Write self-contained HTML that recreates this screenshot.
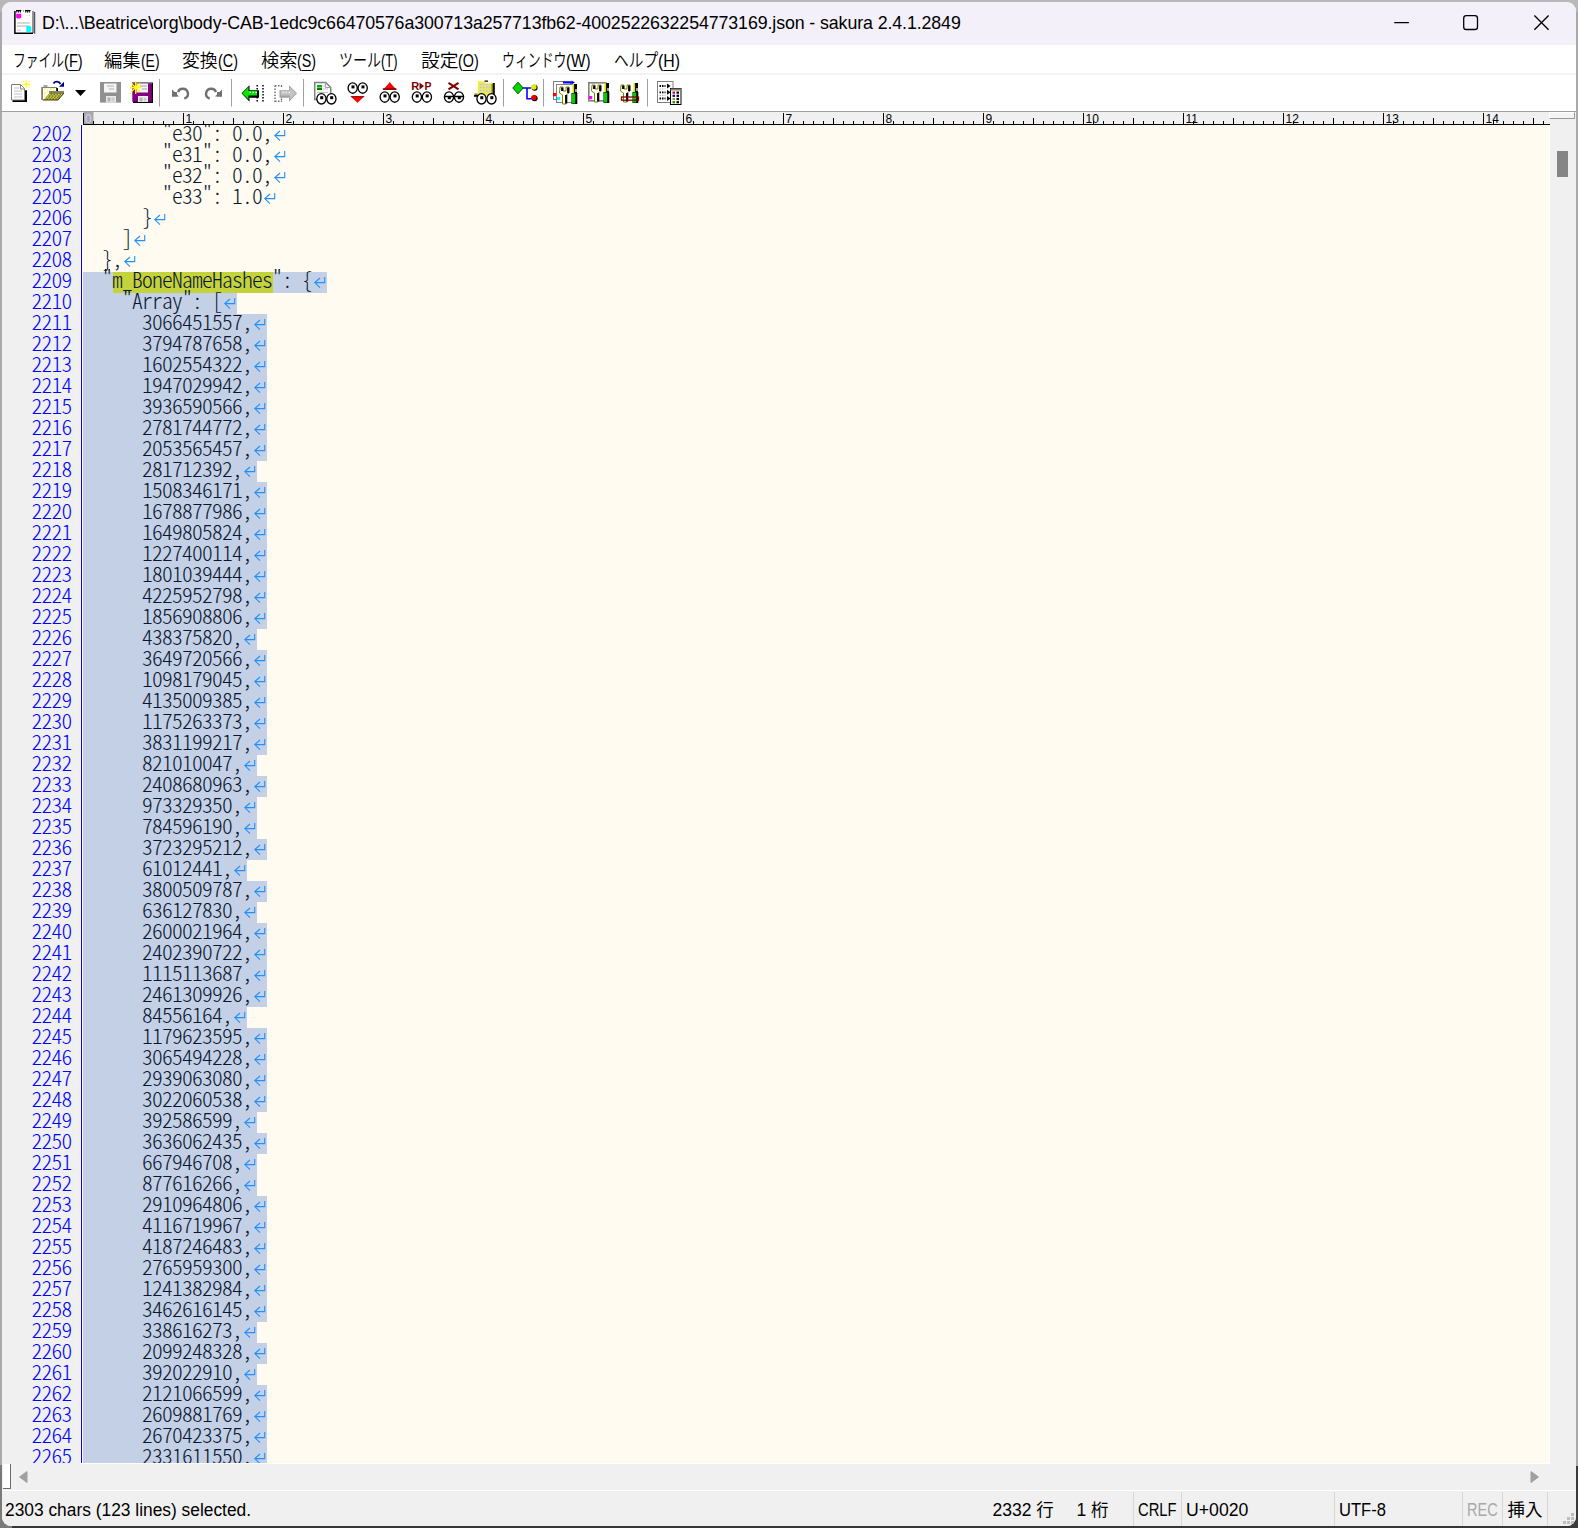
<!DOCTYPE html>
<html lang="ja">
<head>
<meta charset="utf-8">
<title>sakura</title>
<style>
*{box-sizing:border-box;margin:0;padding:0}
html,body{width:1578px;height:1528px;overflow:hidden}
body{position:relative;background:#a9a9a9;font-family:"Liberation Sans","Noto Sans CJK JP",sans-serif;color:#000}
.abs{position:absolute}
#bgtop{left:0;top:0;width:1578px;height:12px;background:#b8b8b8}
#bgleft{left:0;top:1465px;width:14px;height:63px;background:#7a7a7a}
#bgbottom{left:12px;top:1516px;width:1566px;height:12px;background:#363636}
#bgright{left:1570px;top:1466px;width:8px;height:62px;background:#3b3b3b}
#win{left:2px;top:2px;width:1574px;height:1524px;border-radius:9px;overflow:hidden;background:#f0f0f0}
#title{left:0;top:0;width:1574px;height:43px;background:#f3f0f9}
#title .t{left:40px;top:8.5px;font-size:17.8px;letter-spacing:-0.1px;line-height:24px;white-space:nowrap}
#menu{left:0;top:43px;width:1574px;height:28px;background:#fff}
#menu span{position:absolute;top:2px;line-height:24px;white-space:nowrap;transform-origin:0 50%}
#menu .mc{top:4px;font-size:18px;font-family:"Liberation Sans","Noto Sans CJK JP",sans-serif;font-weight:350}
#menu .ml{top:4px;font-size:17.5px;font-family:"Liberation Sans",sans-serif}
#menu u{text-decoration:underline;text-underline-offset:2.5px;text-decoration-thickness:1px}
#msep{left:0;top:71px;width:1574px;height:2px;background:#f3f3f3;z-index:2}
#tool{left:0;top:72px;width:1574px;height:37px;background:#fff}
#tool .sep{position:absolute;top:6px;width:1px;height:27px;background:#a0a0a0}
#rulertop{left:0;top:109px;width:1574px;height:1px;background:#a0a0a0}
#rulerbg{left:0;top:110px;width:1548px;height:13px;background:#f0f0f0}
#ruler{left:81px;top:109px}
#ruler text{font-family:"Liberation Sans",sans-serif;font-size:12px;fill:#000}
#gutter{left:0;top:123px;width:78px;height:1338px;background:#f0f0f0}
#gline{left:79px;top:123px;width:1px;height:1338px;background:#0000ff}
#edit{left:78px;top:123px;width:1470px;height:1339px;background:#fffbf0;overflow:hidden;border-right:1px solid #fff;border-bottom:1px solid #fff}
#rows{left:0;top:123px;width:1547px;height:1338px;overflow:hidden}
.row{position:absolute;left:0;width:1548px;height:21px;font-family:"Noto Sans CJK JP","IPAGothic",monospace;font-weight:300;font-feature-settings:"hwid";font-size:21.5px;letter-spacing:-0.75px;line-height:21px;white-space:pre}
.row .no{position:absolute;left:29.5px;top:-4px;color:#0000ff}
.row .tx{position:absolute;left:80px;top:-4px;color:#0a1630}
.row .eol{position:absolute;top:0;width:14px;height:21px;fill:none;stroke:#2090ff;stroke-width:1.1}
#bgs{left:0;top:123px;width:1547px;height:1338px;overflow:hidden}
#bgs i{position:absolute;height:21px;background:#c3d0e5}
#bgs i.hl{background:#c4d23c}
#vscroll{left:1548px;top:123px;width:26px;height:1339px;background:#f0f0f0}
#vthumb{left:1555px;top:149px;width:11px;height:26px;background:#858585}
#split{left:1547px;top:110px;width:26px;height:7px;background:#f4f4f4;border:1px solid #989898;border-top-color:#fff;border-left-color:#fff;border-bottom-width:1.5px}
#hscroll{left:0;top:1462px;width:1574px;height:26px;background:#f0f0f0}
#status{left:0;top:1488px;width:1574px;height:36px;background:#f0f0f0;border-top:1px solid #fff}
#status span{position:absolute;top:7px;font-size:17.5px;line-height:24px;white-space:nowrap;transform-origin:0 50%}
#status i{position:absolute;top:1px;width:1px;height:34px;background:#d7d7d7}
</style>
</head>
<body>
<div id="bgtop" class="abs"></div>
<div id="bgleft" class="abs"></div>
<div id="bgbottom" class="abs"></div>
<div id="bgright" class="abs"></div>
<div id="win" class="abs">
  <div id="title" class="abs">
    <svg class="abs" style="left:11px;top:7px" width="24" height="26" viewBox="13 9 24 26">
      <rect x="15" y="11" width="17.5" height="22" fill="#fff"/>
      <path d="M14.9 11V33.2H33" fill="none" stroke="#000" stroke-width="1.5"/>
      <path d="M33 11V33M34.7 12V33.8" stroke="#303030" stroke-width="1"/>
      <path d="M16 10.6H21.3M25 10.6H30.6" stroke="#000" stroke-width="1.3"/>
      <path d="M16.8 11V12.6M18.6 11V12.6M20.4 11V12.6M25.8 11V12.6M27.6 11V12.6M29.4 11V12.6" stroke="#000" stroke-width="0.9"/>
      <rect x="23" y="10.6" width="0.8" height="0.8" fill="#000"/>
      <path d="M16.2 13.8H21.2V17.3L20 18.6H17.4L16.2 17.3Z" fill="#ff00ff"/>
      <path d="M26.5 15.5H27.5M29 15.5H30.2" stroke="#c8c8c8" stroke-width="0.8"/>
      <rect x="17" y="22.3" width="13" height="1.3" fill="#c0c0c0"/>
      <rect x="17" y="25.4" width="13" height="1.3" fill="#c0c0c0"/>
      <rect x="17" y="29.8" width="4" height="0.9" fill="#c8c8c8"/>
      <path d="M26.3 26H30L31.3 27.3V30.8L30 32.2H26.3Z" fill="#00ffff"/>
    </svg>
    <div class="abs t">D:\...\Beatrice\org\body-CAB-1edc9c66470576a300713a257713fb62-4002522632254773169.json - sakura 2.4.1.2849</div>
    <svg class="abs" style="left:1386px;top:8px" width="180" height="26" viewBox="1388 10 180 26" fill="none" stroke="#000" stroke-width="1.3">
      <path d="M1394.3 22.6H1408.9"/>
      <rect x="1463.7" y="15.7" width="13.8" height="13.8" rx="2.6"/>
      <path d="M1534.4 15.5L1548.6 29.7M1548.6 15.5L1534.4 29.7"/>
    </svg>
  </div>
  <div id="menu" class="abs">
    <span class="mc" style="left:10.9px;transform:scaleX(0.710)">ファイル</span>
    <span class="ml" style="left:61.8px;transform:scaleX(0.837)">(<u>F</u>)</span>
    <span class="mc" style="left:102.4px;transform:scaleX(1.019)">編集</span>
    <span class="ml" style="left:138.9px;transform:scaleX(0.793)">(<u>E</u>)</span>
    <span class="mc" style="left:180.4px;transform:scaleX(0.992)">変換</span>
    <span class="ml" style="left:215.9px;transform:scaleX(0.819)">(<u>C</u>)</span>
    <span class="mc" style="left:259.1px;transform:scaleX(1.014)">検索</span>
    <span class="ml" style="left:295.4px;transform:scaleX(0.819)">(<u>S</u>)</span>
    <span class="mc" style="left:336.9px;transform:scaleX(0.780)">ツール</span>
    <span class="ml" style="left:378.8px;transform:scaleX(0.734)">(<u>T</u>)</span>
    <span class="mc" style="left:418.8px;transform:scaleX(1.044)">設定</span>
    <span class="ml" style="left:456.2px;transform:scaleX(0.819)">(<u>O</u>)</span>
    <span class="mc" style="left:500.1px;transform:scaleX(0.717)">ウィンドウ</span>
    <span class="ml" style="left:564.4px;transform:scaleX(0.877)">(<u>W</u>)</span>
    <span class="mc" style="left:612.2px;transform:scaleX(0.817)">ヘルプ</span>
    <span class="ml" style="left:656.1px;transform:scaleX(0.906)">(<u>H</u>)</span>
  </div>
  <div id="msep" class="abs"></div>
  <div id="tool" class="abs">
<svg class="abs" style="left:0;top:0" width="700" height="37" viewBox="2 74 700 37">
<path d="M24.3 90.3h2.7v11.7h-14.5v-2.2h11.8z" fill="#000"/>
<path d="M11.5 84.5h9l4 4v11.5h-13z" fill="#fff" stroke="#808080"/>
<path d="M20.5 84.5v4.5h4" fill="none" stroke="#808080"/>
<path d="M14 88h5M14 91h8M14 94h8M14 97h8" stroke="#c0c0c0" stroke-width="1"/>
<path d="M22.7 84.4h7.3M26.3 80.8v7.3" stroke="#ffff00" stroke-width="1.3"/>
<path d="M23 81.6h1.2M28.6 81.6h1.2M28.6 87.4h1.2" stroke="#ffff00" stroke-width="1.2"/>
<rect x="43.5" y="85.2" width="4" height="1.6" fill="#909090"/>
<rect x="42" y="87.5" width="15" height="12" fill="#fff"/>
<path d="M44 89h1.5M47 91h1.5M50 89h1.5M53 91h1.5M44 93h1.5M44 96h1.5M47 87.5h1.5M53 88h1.5" stroke="#ffff00" stroke-width="1.5"/>
<rect x="41.2" y="87" width="1.8" height="13" fill="#808080"/>
<path d="M43 87.5h14" stroke="#808080" stroke-width="1"/>
<rect x="56.2" y="88" width="1.8" height="4" fill="#000"/>
<path d="M49.5 93h14.5l-6 7h-14.500z" fill="#808000"/>
<path d="M49 94.500h14M47.500 96h14M46.500 97.500h13M45 99h13" stroke="#c8c870" stroke-width="1.500" stroke-dasharray="1.500 1.500"/>
<path d="M49 92h15" stroke="#808080" stroke-width="1.8"/>
<path d="M43 100h15l6 -7" fill="none" stroke="#404000" stroke-width="1"/>
<path d="M53.5 83.5c1.5 -2.5 5.5 -2.5 7 0.5" fill="none" stroke="#000080" stroke-width="1.8"/>
<path d="M59 86.8h5v-5z" fill="#000080"/>
<path d="M75 90h11l-5.5 6z" fill="#000"/>
<rect x="100" y="82" width="21" height="20.6" fill="#909090"/>
<rect x="104" y="83.5" width="12.5" height="9" fill="#f4f4f4"/>
<path d="M107 86h7M109 89h5" stroke="#c8c8c8" stroke-width="1.4"/>
<rect x="106" y="96" width="10" height="6.6" fill="#e8e8e8"/>
<rect x="107.5" y="97.5" width="3" height="4" fill="#b0b0b0"/><rect x="111.5" y="97.5" width="3" height="4" fill="#b0b0b0" opacity=".5"/>
<rect x="133" y="82.5" width="20" height="20.5" fill="#000"/>
<rect x="132.3" y="82" width="19.5" height="19.8" fill="#800080"/>
<rect x="132.3" y="82" width="20" height="1.5" fill="#808080"/>
<rect x="136.5" y="83.5" width="11.5" height="9" fill="#f4f4f4"/>
<path d="M140 86h7M142 89h5" stroke="#c0c0c0" stroke-width="1.4"/>
<rect x="138" y="96" width="10" height="6" fill="#f0f0f0"/>
<rect x="139.5" y="97.5" width="3" height="4" fill="#b0b0b0"/><rect x="143.5" y="97.5" width="3" height="4" fill="#b0b0b0" opacity=".5"/>
<path d="M130 87.5h11.5M135.7 81v13M131.5 83.5l8.5 8M140 83.5l-8.5 8" stroke="#ffff00" stroke-width="1.3"/>
<rect x="129.5" y="93" width="1.2" height="1.2" fill="#ffff00"/>
<path d="M178 92c1.5 -4.5 8.5 -4.5 9.8 0.5c0.6 3 -0.8 5.2 -3.5 6" fill="none" stroke="#707070" stroke-width="2.4"/>
<path d="M172 89.5v7h7z" fill="#707070"/><rect x="172" y="92" width="5" height="4.5" fill="#707070"/>
<path d="M216 92c-1.5 -4.5 -8.500 -4.500 -9.800 0.500c-0.600 3 0.800 5.200 3.500 6" fill="none" stroke="#707070" stroke-width="2.4"/>
<path d="M222 89.500v7h-7z" fill="#707070"/><rect x="217" y="92" width="5" height="4.500" fill="#707070"/>
<path d="M257.200 85v17M263 85v17" stroke="#000" stroke-width="1.500" stroke-dasharray="1.500 1.500"/>
<path d="M241.500 93.300l8 -8v5h9.500v7.500h-9.500v4z" fill="#000"/>
<path d="M242.200 93.300l6.300 -6.300v4h8.500v4.500h-8.500v4z" fill="#00e800"/>
<path d="M249.500 92.300h1.500M252.500 92.300h1.500M255.500 92.300h1.500" stroke="#e8ffe8" stroke-width="1.200"/>
<path d="M275 85.500v16.500M281.500 85.500v3M281.500 98.500v3.500M275 85.800h7M275 101.300h7" stroke="#707070" stroke-width="1.500" stroke-dasharray="1.500 1.500"/>
<path d="M297 93.300l-8 -8v5h-9.500v7.500h9.500v4z" fill="#a0a0a0"/>
<path d="M296 93.300l-6.300 -6.300v4h-9v4.500h9v4z" fill="#c4c4c4"/>
<path d="M282.500 92.300h1.500M285.500 92.300h1.500M288.500 92.300h1.500" stroke="#f0f0f0" stroke-width="1.200"/>
<path d="M314.700 82.500h11l5 5v12h-16z" fill="#fff" stroke="#808080" stroke-width="1.500"/>
<path d="M325.500 82.500v5h5" fill="none" stroke="#a0a0a0" stroke-width="1"/>
<rect x="317" y="85" width="5" height="2.300" fill="#00b000"/><rect x="317" y="87.700" width="5" height="2.300" fill="#008000"/>
<path d="M323 86h3M323 89h5M317 92.500h11" stroke="#c0c0c0" stroke-width="1.200"/>
<ellipse cx="321.4" cy="98.8" rx="4.6" ry="5.2" fill="#fff" stroke="#000" stroke-width="1.35"/><rect x="320.2" y="96.2" width="3" height="3" fill="#000"/><ellipse cx="331.4" cy="98.8" rx="4.6" ry="5.2" fill="#fff" stroke="#000" stroke-width="1.35"/><rect x="330.2" y="96.2" width="3" height="3" fill="#000"/>
<ellipse cx="352.7" cy="88.0" rx="4.6" ry="5.2" fill="#fff" stroke="#000" stroke-width="1.35"/><rect x="351.5" y="85.4" width="3" height="3" fill="#000"/><ellipse cx="362.7" cy="88.0" rx="4.6" ry="5.2" fill="#fff" stroke="#000" stroke-width="1.35"/><rect x="361.5" y="85.4" width="3" height="3" fill="#000"/>
<path d="M350.500 96.200h14l-7 6.500z" fill="#ff0000"/><path d="M350.500 96.200h14l-1 1h-12z" fill="#800000"/>
<path d="M383 89.800h13.500l-5 -5.500l-1.700 -2.300l-1.700 2.300z" fill="#ff0000"/><rect x="382.800" y="88.300" width="13.600" height="1.600" fill="#800000"/>
<ellipse cx="384.7" cy="97.0" rx="4.6" ry="5.2" fill="#fff" stroke="#000" stroke-width="1.35"/><rect x="383.5" y="94.4" width="3" height="3" fill="#000"/><ellipse cx="394.7" cy="97.0" rx="4.6" ry="5.2" fill="#fff" stroke="#000" stroke-width="1.35"/><rect x="393.5" y="94.4" width="3" height="3" fill="#000"/>
<text x="411.300" y="89.800" textLength="8" lengthAdjust="spacingAndGlyphs" style="font:bold 10.500px 'Liberation Sans',sans-serif;fill:#800000">R</text>
<path d="M419.500 82.500l4.500 3.600l-4.500 3.600z" fill="#800000"/>
<text x="424.500" y="89.800" textLength="7" lengthAdjust="spacingAndGlyphs" style="font:bold 10.500px 'Liberation Sans',sans-serif;fill:#800000">P</text>
<ellipse cx="416.9" cy="97.0" rx="4.6" ry="5.2" fill="#fff" stroke="#000" stroke-width="1.35"/><rect x="415.7" y="94.4" width="3" height="3" fill="#000"/><ellipse cx="426.9" cy="97.0" rx="4.6" ry="5.2" fill="#fff" stroke="#000" stroke-width="1.35"/><rect x="425.7" y="94.4" width="3" height="3" fill="#000"/>
<path d="M448.500 82.800l10 6.500M458.500 82.800l-10 6.500" stroke="#800000" stroke-width="2"/>
<ellipse cx="449.0" cy="97.0" rx="4.6" ry="5.2" fill="#fff" stroke="#000" stroke-width="1.35"/><path d="M444.4 96.5H453.6" stroke="#000" stroke-width="1.3"/><rect x="447.8" y="97.0" width="3" height="2.2" fill="#000"/><ellipse cx="459.0" cy="97.0" rx="4.6" ry="5.2" fill="#fff" stroke="#000" stroke-width="1.35"/><path d="M454.4 96.5H463.6" stroke="#000" stroke-width="1.3"/><rect x="457.8" y="97.0" width="3" height="2.2" fill="#000"/>
<path d="M478 81.500h6l1.500 2h8v12h-15.500z" fill="#e8e860"/>
<path d="M478 81.500h6l1.500 2h8v12h-15.500z" fill="none" stroke="#ffff00" stroke-width="1" stroke-dasharray="1.500 1.500"/>
<path d="M480 84.500h12M480 87.500h12M480 90.500h12" stroke="#c0c0f0" stroke-width="1.500" stroke-dasharray="1.500 1.500"/>
<rect x="493" y="83" width="1.800" height="13" fill="#000"/><rect x="491.500" y="83.500" width="1.600" height="11" fill="#808000"/>
<path d="M484.500 81.200h3.500" stroke="#000" stroke-width="1.200"/>
<rect x="474" y="95" width="4" height="1.800" fill="#000"/><rect x="474.500" y="93.500" width="3" height="1.500" fill="#808000"/>
<ellipse cx="481.5" cy="98.8" rx="4.6" ry="5.2" fill="#fff" stroke="#000" stroke-width="1.35"/><rect x="480.3" y="96.2" width="3" height="3" fill="#000"/><ellipse cx="491.5" cy="98.8" rx="4.6" ry="5.2" fill="#fff" stroke="#000" stroke-width="1.35"/><rect x="490.3" y="96.2" width="3" height="3" fill="#000"/>
<path d="M523 88h8M527 88v10.700h5" fill="none" stroke="#0000ff" stroke-width="1.600"/>
<path d="M518 82.200l5.200 5.800l-5.200 5.800l-5.200 -5.800z" fill="#00d800" stroke="#005000" stroke-width="1"/>
<circle cx="534.600" cy="87.800" r="3" fill="#000"/><circle cx="533.900" cy="87.100" r="2.700" fill="#e8e800"/>
<circle cx="534.600" cy="98.300" r="3" fill="#000"/><circle cx="533.900" cy="97.600" r="2.700" fill="#e80000"/>
<rect x="553.500" y="81.500" width="17" height="18" fill="#fff" stroke="#808080"/>
<rect x="556.500" y="84.500" width="17" height="18" fill="#fff" stroke="#808080"/>
<rect x="553" y="93" width="3.200" height="3.200" fill="#ff0000"/><rect x="557" y="97" width="3.200" height="3.200" fill="#00ffff"/>
<path d="M563 82.500h9" stroke="#0000ff" stroke-width="1.800"/><path d="M571.500 80.500l3.500 2l-3.500 2z" fill="#0000ff"/>
<path d="M560 87h3v4h3v-4h3v6l-3 2v9h-3.5v-9l-3 -2z" fill="#fff" stroke="#808000" stroke-width="1"/><path d="M562.2 87.5v3.5M568.2 87.5v5.5M566.2 95v8.5" stroke="#000" stroke-width="2.2"/>
<rect x="574.0" y="84" width="3" height="9" fill="#000"/><rect x="572.5" y="84" width="1.6" height="9" fill="#e0e000"/><rect x="575.1" y="89" width="1.8" height="3" fill="#b0b0b0"/><rect x="571.5" y="93" width="5.8" height="11" fill="#000"/><rect x="571.8" y="93.5" width="3.4" height="10" fill="#00d000"/>
<rect x="588.800" y="82.800" width="17" height="18" fill="#fff" stroke="#808080" stroke-width="1.600"/>
<rect x="589" y="96" width="3.200" height="3.200" fill="#ff00ff"/>
<path d="M592 85h3v4h3v-4h3v6l-3 2v9h-3.5v-9l-3 -2z" fill="#fff" stroke="#808000" stroke-width="1"/><path d="M594.2 85.5v3.5M600.2 85.5v5.5M598.2 93v8.5" stroke="#000" stroke-width="2.2"/>
<rect x="606.0" y="83" width="3" height="9" fill="#000"/><rect x="604.5" y="83" width="1.6" height="9" fill="#e0e000"/><rect x="607.1" y="88" width="1.8" height="3" fill="#b0b0b0"/><rect x="603.5" y="92" width="5.8" height="11" fill="#000"/><rect x="603.8" y="92.5" width="3.4" height="10" fill="#00d000"/>
<path d="M621 85h3v4h3v-4h3v6l-3 2v9h-3.5v-9l-3 -2z" fill="#fff" stroke="#808000" stroke-width="1"/><path d="M623.2 85.5v3.5M629.2 85.5v5.5M627.2 93v8.5" stroke="#000" stroke-width="2.2"/>
<rect x="635.0" y="83" width="3" height="9" fill="#000"/><rect x="633.5" y="83" width="1.6" height="9" fill="#e0e000"/><rect x="636.1" y="88" width="1.8" height="3" fill="#b0b0b0"/><rect x="632.5" y="92" width="5.8" height="11" fill="#000"/><rect x="632.8" y="92.5" width="3.4" height="10" fill="#00d000"/>
<rect x="621.500" y="97" width="17" height="3.200" fill="none" stroke="#800000" stroke-width="1.300"/>
<rect x="657.500" y="81.500" width="15.500" height="21" fill="#fff" stroke="#808080"/>
<path d="M659.500 86h6M659.500 92.300h6M659.500 98.500h6" stroke="#000" stroke-width="1.800" stroke-dasharray="1.500 1"/>
<path d="M667 83.500l3.500 2.500l-3.500 2.500zM667 89.800l3.500 2.500l-3.500 2.500zM667 96l3.500 2.500l-3.500 2.500z" fill="#000"/>
<path d="M659.500 89h6M659.500 95.300h6" stroke="#c0c0c0" stroke-width="1.200" stroke-dasharray="1.500 1"/>
<rect x="670.500" y="88.500" width="10.500" height="16" fill="#fff" stroke="#000" stroke-width="1"/>
<rect x="670.500" y="88.500" width="10.500" height="2" fill="#808080"/>
<rect x="672.500" y="91.5" width="2.500" height="2.200" fill="#e00000"/><rect x="676.500" y="91.5" width="2.500" height="2.200" fill="#000"/>
<rect x="672.500" y="94.7" width="2.500" height="2.200" fill="#0000c0"/><rect x="676.500" y="94.7" width="2.500" height="2.200" fill="#000"/>
<rect x="672.500" y="97.9" width="2.500" height="2.200" fill="#a0a000"/><rect x="676.500" y="97.9" width="2.500" height="2.200" fill="#000"/>
<rect x="672.500" y="101.1" width="2.500" height="2.200" fill="#00a000"/><rect x="676.500" y="101.1" width="2.500" height="2.200" fill="#000"/>
<rect x="159" y="79" width="1" height="27.500" fill="#a0a0a0"/>
<rect x="231" y="79" width="1" height="27.500" fill="#a0a0a0"/>
<rect x="303" y="79" width="1" height="27.500" fill="#a0a0a0"/>
<rect x="503" y="79" width="1" height="27.500" fill="#a0a0a0"/>
<rect x="543" y="79" width="1" height="27.500" fill="#a0a0a0"/>
<rect x="647" y="79" width="1" height="27.500" fill="#a0a0a0"/>
</svg>
  </div>
  <div id="rulertop" class="abs"></div>
  <div id="rulerbg" class="abs"></div>
  <div id="gutter" class="abs"></div>
  <div id="edit" class="abs"></div>
  <div id="gline" class="abs"></div>
  <svg id="ruler" class="abs" width="1467" height="15" viewBox="0 0 1467 15">
    <rect x="0.5" y="1" width="10" height="12" fill="#a8a8a8"/>
    <text x="2" y="11.5" style="fill:#d0d0ff">0</text>
    <path d="M0.5 13V2M10.5 13V10M20.5 13V10M30.5 13V10M40.5 13V10M50.5 13V7M60.5 13V10M70.5 13V10M80.5 13V10M90.5 13V10M100.5 13V2M110.5 13V10M120.5 13V10M130.5 13V10M140.5 13V10M150.5 13V7M160.5 13V10M170.5 13V10M180.5 13V10M190.5 13V10M200.5 13V2M210.5 13V10M220.5 13V10M230.5 13V10M240.5 13V10M250.5 13V7M260.5 13V10M270.5 13V10M280.5 13V10M290.5 13V10M300.5 13V2M310.5 13V10M320.5 13V10M330.5 13V10M340.5 13V10M350.5 13V7M360.5 13V10M370.5 13V10M380.5 13V10M390.5 13V10M400.5 13V2M410.5 13V10M420.5 13V10M430.5 13V10M440.5 13V10M450.5 13V7M460.5 13V10M470.5 13V10M480.5 13V10M490.5 13V10M500.5 13V2M510.5 13V10M520.5 13V10M530.5 13V10M540.5 13V10M550.5 13V7M560.5 13V10M570.5 13V10M580.5 13V10M590.5 13V10M600.5 13V2M610.5 13V10M620.5 13V10M630.5 13V10M640.5 13V10M650.5 13V7M660.5 13V10M670.5 13V10M680.5 13V10M690.5 13V10M700.5 13V2M710.5 13V10M720.5 13V10M730.5 13V10M740.5 13V10M750.5 13V7M760.5 13V10M770.5 13V10M780.5 13V10M790.5 13V10M800.5 13V2M810.5 13V10M820.5 13V10M830.5 13V10M840.5 13V10M850.5 13V7M860.5 13V10M870.5 13V10M880.5 13V10M890.5 13V10M900.5 13V2M910.5 13V10M920.5 13V10M930.5 13V10M940.5 13V10M950.5 13V7M960.5 13V10M970.5 13V10M980.5 13V10M990.5 13V10M1000.5 13V2M1010.5 13V10M1020.5 13V10M1030.5 13V10M1040.5 13V10M1050.5 13V7M1060.5 13V10M1070.5 13V10M1080.5 13V10M1090.5 13V10M1100.5 13V2M1110.5 13V10M1120.5 13V10M1130.5 13V10M1140.5 13V10M1150.5 13V7M1160.5 13V10M1170.5 13V10M1180.5 13V10M1190.5 13V10M1200.5 13V2M1210.5 13V10M1220.5 13V10M1230.5 13V10M1240.5 13V10M1250.5 13V7M1260.5 13V10M1270.5 13V10M1280.5 13V10M1290.5 13V10M1300.5 13V2M1310.5 13V10M1320.5 13V10M1330.5 13V10M1340.5 13V10M1350.5 13V7M1360.5 13V10M1370.5 13V10M1380.5 13V10M1390.5 13V10M1400.5 13V2M1410.5 13V10M1420.5 13V10M1430.5 13V10M1440.5 13V10M1450.5 13V7M1460.5 13V10M1470.5 13V10" stroke="#000" stroke-width="1" fill="none"/>
    <path d="M0 13.5H1467" stroke="#000" stroke-width="1"/>
    <text x="102.5" y="11.5">1</text><text x="202.5" y="11.5">2</text><text x="302.5" y="11.5">3</text><text x="402.5" y="11.5">4</text><text x="502.5" y="11.5">5</text><text x="602.5" y="11.5">6</text><text x="702.5" y="11.5">7</text><text x="802.5" y="11.5">8</text><text x="902.5" y="11.5">9</text><text x="1002.5" y="11.5">10</text><text x="1102.5" y="11.5">11</text><text x="1202.5" y="11.5">12</text><text x="1302.5" y="11.5">13</text><text x="1402.5" y="11.5">14</text>
  </svg>
  <div id="bgs" class="abs"><i style="left:81px;top:147px;width:244px"></i><i class="hl" style="left:111px;top:147px;width:160px"></i><i style="left:81px;top:168px;width:154px"></i><i style="left:81px;top:189px;width:184px"></i><i style="left:81px;top:210px;width:184px"></i><i style="left:81px;top:231px;width:184px"></i><i style="left:81px;top:252px;width:184px"></i><i style="left:81px;top:273px;width:184px"></i><i style="left:81px;top:294px;width:184px"></i><i style="left:81px;top:315px;width:184px"></i><i style="left:81px;top:336px;width:174px"></i><i style="left:81px;top:357px;width:184px"></i><i style="left:81px;top:378px;width:184px"></i><i style="left:81px;top:399px;width:184px"></i><i style="left:81px;top:420px;width:184px"></i><i style="left:81px;top:441px;width:184px"></i><i style="left:81px;top:462px;width:184px"></i><i style="left:81px;top:483px;width:184px"></i><i style="left:81px;top:504px;width:174px"></i><i style="left:81px;top:525px;width:184px"></i><i style="left:81px;top:546px;width:184px"></i><i style="left:81px;top:567px;width:184px"></i><i style="left:81px;top:588px;width:184px"></i><i style="left:81px;top:609px;width:184px"></i><i style="left:81px;top:630px;width:174px"></i><i style="left:81px;top:651px;width:184px"></i><i style="left:81px;top:672px;width:174px"></i><i style="left:81px;top:693px;width:174px"></i><i style="left:81px;top:714px;width:184px"></i><i style="left:81px;top:735px;width:164px"></i><i style="left:81px;top:756px;width:184px"></i><i style="left:81px;top:777px;width:174px"></i><i style="left:81px;top:798px;width:184px"></i><i style="left:81px;top:819px;width:184px"></i><i style="left:81px;top:840px;width:184px"></i><i style="left:81px;top:861px;width:184px"></i><i style="left:81px;top:882px;width:164px"></i><i style="left:81px;top:903px;width:184px"></i><i style="left:81px;top:924px;width:184px"></i><i style="left:81px;top:945px;width:184px"></i><i style="left:81px;top:966px;width:184px"></i><i style="left:81px;top:987px;width:174px"></i><i style="left:81px;top:1008px;width:184px"></i><i style="left:81px;top:1029px;width:174px"></i><i style="left:81px;top:1050px;width:174px"></i><i style="left:81px;top:1071px;width:184px"></i><i style="left:81px;top:1092px;width:184px"></i><i style="left:81px;top:1113px;width:184px"></i><i style="left:81px;top:1134px;width:184px"></i><i style="left:81px;top:1155px;width:184px"></i><i style="left:81px;top:1176px;width:184px"></i><i style="left:81px;top:1197px;width:174px"></i><i style="left:81px;top:1218px;width:184px"></i><i style="left:81px;top:1239px;width:174px"></i><i style="left:81px;top:1260px;width:184px"></i><i style="left:81px;top:1281px;width:184px"></i><i style="left:81px;top:1302px;width:184px"></i><i style="left:81px;top:1323px;width:184px"></i></div>
  <div id="rows" class="abs">
<div class="row" style="top:0px"><span class="no">2202</span><span class="tx">        "e30": 0.0,</span><svg class="eol" style="left:271px" viewBox="0 0 14 21"><path d="M11.7 5V10.6H1.8M7 6L1.8 10.6L7 15.6"/></svg></div>
<div class="row" style="top:21px"><span class="no">2203</span><span class="tx">        "e31": 0.0,</span><svg class="eol" style="left:271px" viewBox="0 0 14 21"><path d="M11.7 5V10.6H1.8M7 6L1.8 10.6L7 15.6"/></svg></div>
<div class="row" style="top:42px"><span class="no">2204</span><span class="tx">        "e32": 0.0,</span><svg class="eol" style="left:271px" viewBox="0 0 14 21"><path d="M11.7 5V10.6H1.8M7 6L1.8 10.6L7 15.6"/></svg></div>
<div class="row" style="top:63px"><span class="no">2205</span><span class="tx">        "e33": 1.0</span><svg class="eol" style="left:261px" viewBox="0 0 14 21"><path d="M11.7 5V10.6H1.8M7 6L1.8 10.6L7 15.6"/></svg></div>
<div class="row" style="top:84px"><span class="no">2206</span><span class="tx">      }</span><svg class="eol" style="left:151px" viewBox="0 0 14 21"><path d="M11.7 5V10.6H1.8M7 6L1.8 10.6L7 15.6"/></svg></div>
<div class="row" style="top:105px"><span class="no">2207</span><span class="tx">    ]</span><svg class="eol" style="left:131px" viewBox="0 0 14 21"><path d="M11.7 5V10.6H1.8M7 6L1.8 10.6L7 15.6"/></svg></div>
<div class="row" style="top:126px"><span class="no">2208</span><span class="tx">  },</span><svg class="eol" style="left:121px" viewBox="0 0 14 21"><path d="M11.7 5V10.6H1.8M7 6L1.8 10.6L7 15.6"/></svg></div>
<div class="row" style="top:147px"><span class="no">2209</span><span class="tx">  "m_BoneNameHashes": {</span><svg class="eol" style="left:311px" viewBox="0 0 14 21"><path d="M11.7 5V10.6H1.8M7 6L1.8 10.6L7 15.6"/></svg></div>
<div class="row" style="top:168px"><span class="no">2210</span><span class="tx">    "Array": [</span><svg class="eol" style="left:221px" viewBox="0 0 14 21"><path d="M11.7 5V10.6H1.8M7 6L1.8 10.6L7 15.6"/></svg></div>
<div class="row" style="top:189px"><span class="no">2211</span><span class="tx">      3066451557,</span><svg class="eol" style="left:251px" viewBox="0 0 14 21"><path d="M11.7 5V10.6H1.8M7 6L1.8 10.6L7 15.6"/></svg></div>
<div class="row" style="top:210px"><span class="no">2212</span><span class="tx">      3794787658,</span><svg class="eol" style="left:251px" viewBox="0 0 14 21"><path d="M11.7 5V10.6H1.8M7 6L1.8 10.6L7 15.6"/></svg></div>
<div class="row" style="top:231px"><span class="no">2213</span><span class="tx">      1602554322,</span><svg class="eol" style="left:251px" viewBox="0 0 14 21"><path d="M11.7 5V10.6H1.8M7 6L1.8 10.6L7 15.6"/></svg></div>
<div class="row" style="top:252px"><span class="no">2214</span><span class="tx">      1947029942,</span><svg class="eol" style="left:251px" viewBox="0 0 14 21"><path d="M11.7 5V10.6H1.8M7 6L1.8 10.6L7 15.6"/></svg></div>
<div class="row" style="top:273px"><span class="no">2215</span><span class="tx">      3936590566,</span><svg class="eol" style="left:251px" viewBox="0 0 14 21"><path d="M11.7 5V10.6H1.8M7 6L1.8 10.6L7 15.6"/></svg></div>
<div class="row" style="top:294px"><span class="no">2216</span><span class="tx">      2781744772,</span><svg class="eol" style="left:251px" viewBox="0 0 14 21"><path d="M11.7 5V10.6H1.8M7 6L1.8 10.6L7 15.6"/></svg></div>
<div class="row" style="top:315px"><span class="no">2217</span><span class="tx">      2053565457,</span><svg class="eol" style="left:251px" viewBox="0 0 14 21"><path d="M11.7 5V10.6H1.8M7 6L1.8 10.6L7 15.6"/></svg></div>
<div class="row" style="top:336px"><span class="no">2218</span><span class="tx">      281712392,</span><svg class="eol" style="left:241px" viewBox="0 0 14 21"><path d="M11.7 5V10.6H1.8M7 6L1.8 10.6L7 15.6"/></svg></div>
<div class="row" style="top:357px"><span class="no">2219</span><span class="tx">      1508346171,</span><svg class="eol" style="left:251px" viewBox="0 0 14 21"><path d="M11.7 5V10.6H1.8M7 6L1.8 10.6L7 15.6"/></svg></div>
<div class="row" style="top:378px"><span class="no">2220</span><span class="tx">      1678877986,</span><svg class="eol" style="left:251px" viewBox="0 0 14 21"><path d="M11.7 5V10.6H1.8M7 6L1.8 10.6L7 15.6"/></svg></div>
<div class="row" style="top:399px"><span class="no">2221</span><span class="tx">      1649805824,</span><svg class="eol" style="left:251px" viewBox="0 0 14 21"><path d="M11.7 5V10.6H1.8M7 6L1.8 10.6L7 15.6"/></svg></div>
<div class="row" style="top:420px"><span class="no">2222</span><span class="tx">      1227400114,</span><svg class="eol" style="left:251px" viewBox="0 0 14 21"><path d="M11.7 5V10.6H1.8M7 6L1.8 10.6L7 15.6"/></svg></div>
<div class="row" style="top:441px"><span class="no">2223</span><span class="tx">      1801039444,</span><svg class="eol" style="left:251px" viewBox="0 0 14 21"><path d="M11.7 5V10.6H1.8M7 6L1.8 10.6L7 15.6"/></svg></div>
<div class="row" style="top:462px"><span class="no">2224</span><span class="tx">      4225952798,</span><svg class="eol" style="left:251px" viewBox="0 0 14 21"><path d="M11.7 5V10.6H1.8M7 6L1.8 10.6L7 15.6"/></svg></div>
<div class="row" style="top:483px"><span class="no">2225</span><span class="tx">      1856908806,</span><svg class="eol" style="left:251px" viewBox="0 0 14 21"><path d="M11.7 5V10.6H1.8M7 6L1.8 10.6L7 15.6"/></svg></div>
<div class="row" style="top:504px"><span class="no">2226</span><span class="tx">      438375820,</span><svg class="eol" style="left:241px" viewBox="0 0 14 21"><path d="M11.7 5V10.6H1.8M7 6L1.8 10.6L7 15.6"/></svg></div>
<div class="row" style="top:525px"><span class="no">2227</span><span class="tx">      3649720566,</span><svg class="eol" style="left:251px" viewBox="0 0 14 21"><path d="M11.7 5V10.6H1.8M7 6L1.8 10.6L7 15.6"/></svg></div>
<div class="row" style="top:546px"><span class="no">2228</span><span class="tx">      1098179045,</span><svg class="eol" style="left:251px" viewBox="0 0 14 21"><path d="M11.7 5V10.6H1.8M7 6L1.8 10.6L7 15.6"/></svg></div>
<div class="row" style="top:567px"><span class="no">2229</span><span class="tx">      4135009385,</span><svg class="eol" style="left:251px" viewBox="0 0 14 21"><path d="M11.7 5V10.6H1.8M7 6L1.8 10.6L7 15.6"/></svg></div>
<div class="row" style="top:588px"><span class="no">2230</span><span class="tx">      1175263373,</span><svg class="eol" style="left:251px" viewBox="0 0 14 21"><path d="M11.7 5V10.6H1.8M7 6L1.8 10.6L7 15.6"/></svg></div>
<div class="row" style="top:609px"><span class="no">2231</span><span class="tx">      3831199217,</span><svg class="eol" style="left:251px" viewBox="0 0 14 21"><path d="M11.7 5V10.6H1.8M7 6L1.8 10.6L7 15.6"/></svg></div>
<div class="row" style="top:630px"><span class="no">2232</span><span class="tx">      821010047,</span><svg class="eol" style="left:241px" viewBox="0 0 14 21"><path d="M11.7 5V10.6H1.8M7 6L1.8 10.6L7 15.6"/></svg></div>
<div class="row" style="top:651px"><span class="no">2233</span><span class="tx">      2408680963,</span><svg class="eol" style="left:251px" viewBox="0 0 14 21"><path d="M11.7 5V10.6H1.8M7 6L1.8 10.6L7 15.6"/></svg></div>
<div class="row" style="top:672px"><span class="no">2234</span><span class="tx">      973329350,</span><svg class="eol" style="left:241px" viewBox="0 0 14 21"><path d="M11.7 5V10.6H1.8M7 6L1.8 10.6L7 15.6"/></svg></div>
<div class="row" style="top:693px"><span class="no">2235</span><span class="tx">      784596190,</span><svg class="eol" style="left:241px" viewBox="0 0 14 21"><path d="M11.7 5V10.6H1.8M7 6L1.8 10.6L7 15.6"/></svg></div>
<div class="row" style="top:714px"><span class="no">2236</span><span class="tx">      3723295212,</span><svg class="eol" style="left:251px" viewBox="0 0 14 21"><path d="M11.7 5V10.6H1.8M7 6L1.8 10.6L7 15.6"/></svg></div>
<div class="row" style="top:735px"><span class="no">2237</span><span class="tx">      61012441,</span><svg class="eol" style="left:231px" viewBox="0 0 14 21"><path d="M11.7 5V10.6H1.8M7 6L1.8 10.6L7 15.6"/></svg></div>
<div class="row" style="top:756px"><span class="no">2238</span><span class="tx">      3800509787,</span><svg class="eol" style="left:251px" viewBox="0 0 14 21"><path d="M11.7 5V10.6H1.8M7 6L1.8 10.6L7 15.6"/></svg></div>
<div class="row" style="top:777px"><span class="no">2239</span><span class="tx">      636127830,</span><svg class="eol" style="left:241px" viewBox="0 0 14 21"><path d="M11.7 5V10.6H1.8M7 6L1.8 10.6L7 15.6"/></svg></div>
<div class="row" style="top:798px"><span class="no">2240</span><span class="tx">      2600021964,</span><svg class="eol" style="left:251px" viewBox="0 0 14 21"><path d="M11.7 5V10.6H1.8M7 6L1.8 10.6L7 15.6"/></svg></div>
<div class="row" style="top:819px"><span class="no">2241</span><span class="tx">      2402390722,</span><svg class="eol" style="left:251px" viewBox="0 0 14 21"><path d="M11.7 5V10.6H1.8M7 6L1.8 10.6L7 15.6"/></svg></div>
<div class="row" style="top:840px"><span class="no">2242</span><span class="tx">      1115113687,</span><svg class="eol" style="left:251px" viewBox="0 0 14 21"><path d="M11.7 5V10.6H1.8M7 6L1.8 10.6L7 15.6"/></svg></div>
<div class="row" style="top:861px"><span class="no">2243</span><span class="tx">      2461309926,</span><svg class="eol" style="left:251px" viewBox="0 0 14 21"><path d="M11.7 5V10.6H1.8M7 6L1.8 10.6L7 15.6"/></svg></div>
<div class="row" style="top:882px"><span class="no">2244</span><span class="tx">      84556164,</span><svg class="eol" style="left:231px" viewBox="0 0 14 21"><path d="M11.7 5V10.6H1.8M7 6L1.8 10.6L7 15.6"/></svg></div>
<div class="row" style="top:903px"><span class="no">2245</span><span class="tx">      1179623595,</span><svg class="eol" style="left:251px" viewBox="0 0 14 21"><path d="M11.7 5V10.6H1.8M7 6L1.8 10.6L7 15.6"/></svg></div>
<div class="row" style="top:924px"><span class="no">2246</span><span class="tx">      3065494228,</span><svg class="eol" style="left:251px" viewBox="0 0 14 21"><path d="M11.7 5V10.6H1.8M7 6L1.8 10.6L7 15.6"/></svg></div>
<div class="row" style="top:945px"><span class="no">2247</span><span class="tx">      2939063080,</span><svg class="eol" style="left:251px" viewBox="0 0 14 21"><path d="M11.7 5V10.6H1.8M7 6L1.8 10.6L7 15.6"/></svg></div>
<div class="row" style="top:966px"><span class="no">2248</span><span class="tx">      3022060538,</span><svg class="eol" style="left:251px" viewBox="0 0 14 21"><path d="M11.7 5V10.6H1.8M7 6L1.8 10.6L7 15.6"/></svg></div>
<div class="row" style="top:987px"><span class="no">2249</span><span class="tx">      392586599,</span><svg class="eol" style="left:241px" viewBox="0 0 14 21"><path d="M11.7 5V10.6H1.8M7 6L1.8 10.6L7 15.6"/></svg></div>
<div class="row" style="top:1008px"><span class="no">2250</span><span class="tx">      3636062435,</span><svg class="eol" style="left:251px" viewBox="0 0 14 21"><path d="M11.7 5V10.6H1.8M7 6L1.8 10.6L7 15.6"/></svg></div>
<div class="row" style="top:1029px"><span class="no">2251</span><span class="tx">      667946708,</span><svg class="eol" style="left:241px" viewBox="0 0 14 21"><path d="M11.7 5V10.6H1.8M7 6L1.8 10.6L7 15.6"/></svg></div>
<div class="row" style="top:1050px"><span class="no">2252</span><span class="tx">      877616266,</span><svg class="eol" style="left:241px" viewBox="0 0 14 21"><path d="M11.7 5V10.6H1.8M7 6L1.8 10.6L7 15.6"/></svg></div>
<div class="row" style="top:1071px"><span class="no">2253</span><span class="tx">      2910964806,</span><svg class="eol" style="left:251px" viewBox="0 0 14 21"><path d="M11.7 5V10.6H1.8M7 6L1.8 10.6L7 15.6"/></svg></div>
<div class="row" style="top:1092px"><span class="no">2254</span><span class="tx">      4116719967,</span><svg class="eol" style="left:251px" viewBox="0 0 14 21"><path d="M11.7 5V10.6H1.8M7 6L1.8 10.6L7 15.6"/></svg></div>
<div class="row" style="top:1113px"><span class="no">2255</span><span class="tx">      4187246483,</span><svg class="eol" style="left:251px" viewBox="0 0 14 21"><path d="M11.7 5V10.6H1.8M7 6L1.8 10.6L7 15.6"/></svg></div>
<div class="row" style="top:1134px"><span class="no">2256</span><span class="tx">      2765959300,</span><svg class="eol" style="left:251px" viewBox="0 0 14 21"><path d="M11.7 5V10.6H1.8M7 6L1.8 10.6L7 15.6"/></svg></div>
<div class="row" style="top:1155px"><span class="no">2257</span><span class="tx">      1241382984,</span><svg class="eol" style="left:251px" viewBox="0 0 14 21"><path d="M11.7 5V10.6H1.8M7 6L1.8 10.6L7 15.6"/></svg></div>
<div class="row" style="top:1176px"><span class="no">2258</span><span class="tx">      3462616145,</span><svg class="eol" style="left:251px" viewBox="0 0 14 21"><path d="M11.7 5V10.6H1.8M7 6L1.8 10.6L7 15.6"/></svg></div>
<div class="row" style="top:1197px"><span class="no">2259</span><span class="tx">      338616273,</span><svg class="eol" style="left:241px" viewBox="0 0 14 21"><path d="M11.7 5V10.6H1.8M7 6L1.8 10.6L7 15.6"/></svg></div>
<div class="row" style="top:1218px"><span class="no">2260</span><span class="tx">      2099248328,</span><svg class="eol" style="left:251px" viewBox="0 0 14 21"><path d="M11.7 5V10.6H1.8M7 6L1.8 10.6L7 15.6"/></svg></div>
<div class="row" style="top:1239px"><span class="no">2261</span><span class="tx">      392022910,</span><svg class="eol" style="left:241px" viewBox="0 0 14 21"><path d="M11.7 5V10.6H1.8M7 6L1.8 10.6L7 15.6"/></svg></div>
<div class="row" style="top:1260px"><span class="no">2262</span><span class="tx">      2121066599,</span><svg class="eol" style="left:251px" viewBox="0 0 14 21"><path d="M11.7 5V10.6H1.8M7 6L1.8 10.6L7 15.6"/></svg></div>
<div class="row" style="top:1281px"><span class="no">2263</span><span class="tx">      2609881769,</span><svg class="eol" style="left:251px" viewBox="0 0 14 21"><path d="M11.7 5V10.6H1.8M7 6L1.8 10.6L7 15.6"/></svg></div>
<div class="row" style="top:1302px"><span class="no">2264</span><span class="tx">      2670423375,</span><svg class="eol" style="left:251px" viewBox="0 0 14 21"><path d="M11.7 5V10.6H1.8M7 6L1.8 10.6L7 15.6"/></svg></div>
<div class="row" style="top:1323px"><span class="no">2265</span><span class="tx">      2331611550,</span><svg class="eol" style="left:251px" viewBox="0 0 14 21"><path d="M11.7 5V10.6H1.8M7 6L1.8 10.6L7 15.6"/></svg></div>
  </div>
  <div id="vscroll" class="abs"></div>
  <div id="vthumb" class="abs"></div>
  <div id="split" class="abs"></div>
  <div id="hscroll" class="abs">
    <div class="abs" style="left:1px;top:0;width:7.5px;height:25px;background:#fff;border-right:1.5px solid #6e6e6e;border-bottom:1.5px solid #6e6e6e"></div>
    <svg class="abs" style="left:15.5px;top:6px" width="10" height="14" viewBox="0 0 10 14"><path d="M9 1.5L1.5 7L9 12.5Z" fill="#a0a0a0" stroke="#a0a0a0" stroke-linejoin="round" stroke-width="1"/></svg>
    <svg class="abs" style="left:1528px;top:6px" width="10" height="14" viewBox="0 0 10 14"><path d="M1 1.5L8.5 7L1 12.5Z" fill="#a0a0a0" stroke="#a0a0a0" stroke-linejoin="round" stroke-width="1"/></svg>
  </div>
  <div id="status" class="abs">
    <span style="left:3px;transform:scaleX(.992)">2303 chars (123 lines) selected.</span>
    <span style="left:990.5px">2332 行</span>
    <span style="left:1074.5px">1 桁</span>
    <i style="left:1131px"></i>
    <span style="left:1136px;transform:scaleX(.845)">CRLF</span>
    <i style="left:1179px"></i>
    <span style="left:1184px;transform:scaleX(1.01)">U+0020</span>
    <i style="left:1332px"></i>
    <span style="left:1336.5px;transform:scaleX(.945)">UTF-8</span>
    <i style="left:1460px"></i>
    <span style="left:1464.5px;color:#a8a8a8;transform:scaleX(.83)">REC</span>
    <i style="left:1500px"></i>
    <span style="left:1505.5px">挿入</span>
    <i style="left:1545px"></i>
    <svg class="abs" style="left:1560px;top:21px" width="14" height="14" viewBox="0 0 14 14" fill="#bdbdbd"><rect x="9" y="1" width="3" height="3"/><rect x="5" y="5" width="3" height="3"/><rect x="9" y="5" width="3" height="3"/><rect x="1" y="9" width="3" height="3"/><rect x="5" y="9" width="3" height="3"/><rect x="9" y="9" width="3" height="3"/></svg>
  </div>
</div>
</body>
</html>
